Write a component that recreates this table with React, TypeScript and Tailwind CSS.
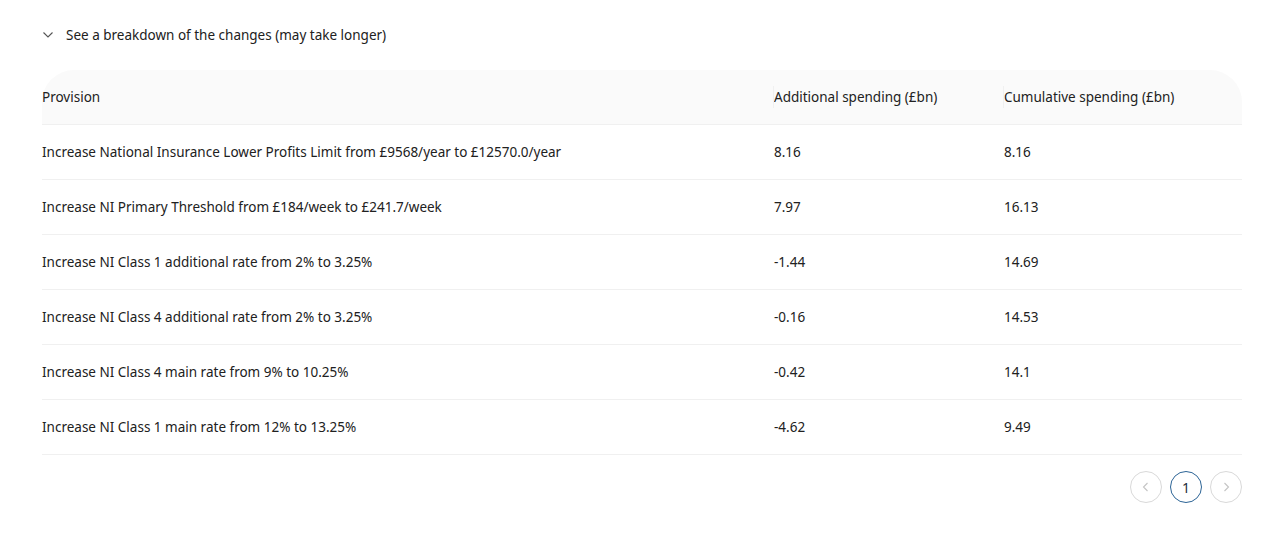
import React from "react";

const rows = [
  ["Increase National Insurance Lower Profits Limit from £9568/year to £12570.0/year", "8.16", "8.16"],
  ["Increase NI Primary Threshold from £184/week to £241.7/week", "7.97", "16.13"],
  ["Increase NI Class 1 additional rate from 2% to 3.25%", "-1.44", "14.69"],
  ["Increase NI Class 4 additional rate from 2% to 3.25%", "-0.16", "14.53"],
  ["Increase NI Class 4 main rate from 9% to 10.25%", "-0.42", "14.1"],
  ["Increase NI Class 1 main rate from 12% to 13.25%", "-4.62", "9.49"],
];

export default function App() {
  return (
    <div
      className="w-[1263px] h-[537px] bg-white text-[13.5px] text-[#212121] px-[42px] pt-[25px]"
      style={{ fontFamily: '"Noto Sans", sans-serif' }}
    >
      <div className="flex items-center h-[20px]">
        <svg width="12" height="12" viewBox="0 0 12 12" className="mr-[12px]">
          <path d="M1.5 3.5 L6 8 L10.5 3.5" fill="none" stroke="#555" strokeWidth="1.1" />
        </svg>
        <span>See a breakdown of the changes (may take longer)</span>
      </div>

      <div className="mt-[25px] w-[1200px]">
        <div className="flex h-[55px] items-center bg-[#fafafa] rounded-t-[32px] border-b border-[#f0f0f0]">
          <div className="w-[732px]">Provision</div>
          <div className="w-[230px] relative">
            <span className="absolute left-[-1px] top-1/2 -translate-y-1/2 h-[22px] w-px bg-[#f0f0f0]" />
            Additional spending (£bn)
          </div>
          <div className="flex-1 relative">
            <span className="absolute left-[-1px] top-1/2 -translate-y-1/2 h-[22px] w-px bg-[#f0f0f0]" />
            Cumulative spending (£bn)
          </div>
        </div>
        {rows.map((r, i) => (
          <div key={i} className="flex h-[55px] items-center border-b border-[#f0f0f0]">
            <div className="w-[732px]">{r[0]}</div>
            <div className="w-[230px]">{r[1]}</div>
            <div className="flex-1">{r[2]}</div>
          </div>
        ))}
      </div>

      <div className="flex justify-end gap-[8px] mt-[16px] w-[1200px]">
        <div className="w-[32px] h-[32px] rounded-full border border-[#d9d9d9] flex items-center justify-center">
          <svg width="12" height="12" viewBox="0 0 12 12">
            <path d="M7.5 2 L3.5 6 L7.5 10" fill="none" stroke="#c4c4c4" strokeWidth="1.1" />
          </svg>
        </div>
        <div className="w-[32px] h-[32px] rounded-full border border-[#2c6496] flex items-center justify-center text-[#1f2d3d] text-[14px]">
          1
        </div>
        <div className="w-[32px] h-[32px] rounded-full border border-[#d9d9d9] flex items-center justify-center">
          <svg width="12" height="12" viewBox="0 0 12 12">
            <path d="M4.5 2 L8.5 6 L4.5 10" fill="none" stroke="#c4c4c4" strokeWidth="1.1" />
          </svg>
        </div>
      </div>
    </div>
  );
}
